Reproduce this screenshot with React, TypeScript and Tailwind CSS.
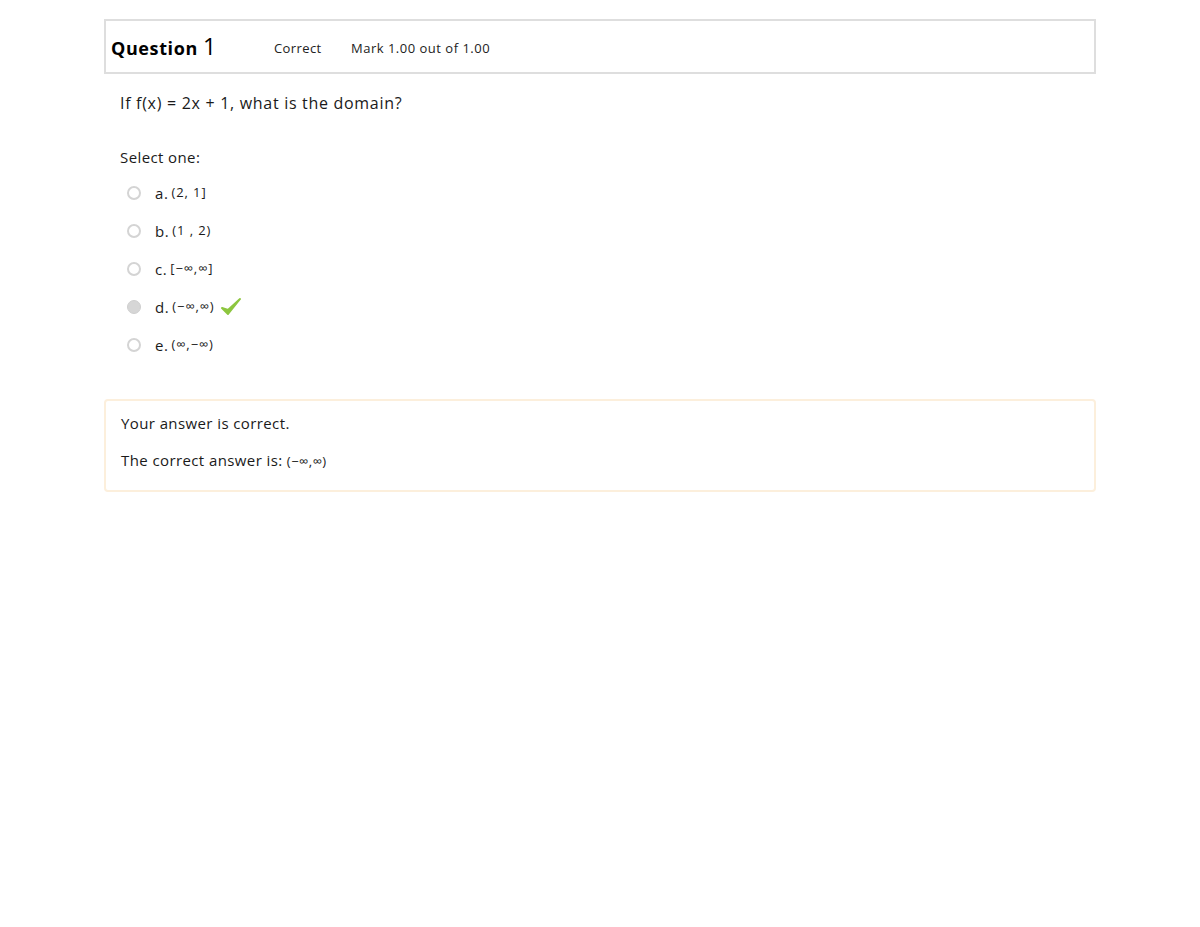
const options = [
  { letter: "a.", text: "(2, 1]", checked: false },
  { letter: "b.", text: "(1 , 2)", checked: false },
  { letter: "c.", text: "[−∞,∞]", checked: false },
  { letter: "d.", text: "(−∞,∞)", checked: true },
  { letter: "e.", text: "(∞,−∞)", checked: false },
];

function Radio({ checked }: { checked: boolean }) {
  return (
    <span
      className={
        checked
          ? "w-[14px] h-[14px] rounded-full border border-[#cfcfcf] bg-[#d6d6d6] shrink-0"
          : "w-[14px] h-[14px] rounded-full border-2 border-[#d4d4d4] bg-white shrink-0"
      }
    />
  );
}

function Check() {
  return (
    <svg width="22" height="20" viewBox="0 0 22 20" className="ml-[5px]">
      <path
        d="M2 11 L8 17 L20 2 L8 13 Z"
        fill="#8dc63f"
        stroke="#8dc63f"
        strokeWidth="2"
        strokeLinejoin="round"
      />
    </svg>
  );
}

export default function App() {
  return (
    <div className="w-[1200px] h-[927px] bg-white text-[#1a1a1a] font-['Open_Sans',sans-serif]">
      <div className="pt-[19px] px-[104px]">
        <div className="h-[55px] border-2 border-[#dedede] flex items-center px-[5px] pb-[1px]">
          <div className="w-[163px] font-bold text-[18px] tracking-[0.6px] text-black">
            Question <span className="text-[23px] font-normal">1</span>
          </div>
          <div className="w-[77px] mt-[5px] text-[13px] tracking-[0.4px] text-[#222]">Correct</div>
          <div className="mt-[5px] text-[13px] tracking-[0.5px] text-[#222]">Mark 1.00 out of 1.00</div>
        </div>

        <div className="px-[16px] pt-[18px]">
          <p className="text-[16px] tracking-[0.7px] leading-[22px] text-[#1a1a1a]">
            If f(x) = 2x + 1, what is the domain?
          </p>
          <p className="mt-[32px] text-[15px] tracking-[0.4px] leading-[22px] text-[#1a1a1a]">Select one:</p>
          <div className="mt-[6px] flex flex-col">
            {options.map((o) => (
              <div key={o.letter} className="h-[38px] flex items-center pl-[7px]">
                <Radio checked={o.checked} />
                <span className="ml-[14px] text-[15px] tracking-[0.6px] text-[#1a1a1a]">{o.letter}</span>
                <span className="ml-[3px] text-[13px] tracking-[0.9px] text-[#1a1a1a]">{o.text}</span>
                {o.checked && <Check />}
              </div>
            ))}
          </div>
        </div>

        <div className="mt-[35px] h-[93px] border-2 border-[#fcefdc] rounded-[4px] px-[15px] pt-[12px]">
          <p className="text-[15px] tracking-[0.4px] leading-[20px] text-[#1a1a1a]">Your answer is correct.</p>
          <p className="mt-[17px] text-[15px] tracking-[0.4px] leading-[20px] text-[#1a1a1a]">
            The correct answer is: <span className="text-[13px] tracking-[0.5px]">(−∞,∞)</span>
          </p>
        </div>
      </div>
    </div>
  );
}
